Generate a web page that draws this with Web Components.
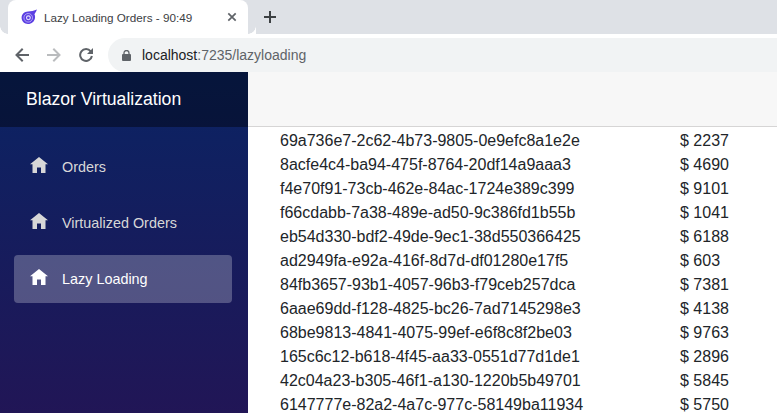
<!DOCTYPE html>
<html><head><meta charset="utf-8"><title>Lazy Loading Orders</title>
<style>html,body{margin:0;padding:0;height:100%;overflow:hidden;background:#fff}
body{display:flex;flex-direction:column;height:413px;font-family:"Liberation Sans",Arial,sans-serif}</style></head>
<body>
<browser-chrome></browser-chrome>
<app-shell>
  <side-bar slot="side" brand="Blazor Virtualization">
    <nav-link label="Orders"></nav-link>
    <nav-link label="Virtualized Orders"></nav-link>
    <nav-link label="Lazy Loading" active></nav-link>
  </side-bar>
  <order-row id-text="69a736e7-2c62-4b73-9805-0e9efc8a1e2e" amount="$ 2237"></order-row>
  <order-row id-text="8acfe4c4-ba94-475f-8764-20df14a9aaa3" amount="$ 4690"></order-row>
  <order-row id-text="f4e70f91-73cb-462e-84ac-1724e389c399" amount="$ 9101"></order-row>
  <order-row id-text="f66cdabb-7a38-489e-ad50-9c386fd1b55b" amount="$ 1041"></order-row>
  <order-row id-text="eb54d330-bdf2-49de-9ec1-38d550366425" amount="$ 6188"></order-row>
  <order-row id-text="ad2949fa-e92a-416f-8d7d-df01280e17f5" amount="$ 603"></order-row>
  <order-row id-text="84fb3657-93b1-4057-96b3-f79ceb257dca" amount="$ 7381"></order-row>
  <order-row id-text="6aae69dd-f128-4825-bc26-7ad7145298e3" amount="$ 4138"></order-row>
  <order-row id-text="68be9813-4841-4075-99ef-e6f8c8f2be03" amount="$ 9763"></order-row>
  <order-row id-text="165c6c12-b618-4f45-aa33-0551d77d1de1" amount="$ 2896"></order-row>
  <order-row id-text="42c04a23-b305-46f1-a130-1220b5b49701" amount="$ 5845"></order-row>
  <order-row id-text="6147777e-82a2-4a7c-977c-58149ba11934" amount="$ 5750"></order-row>
</app-shell>
<script>
const def=(name,html)=>customElements.define(name,class extends HTMLElement{
  connectedCallback(){ if(this.shadowRoot)return; const s=this.attachShadow({mode:'open'}); s.innerHTML=typeof html==='function'?html(this):html; }
});
def('browser-chrome',`<style>
:host{display:block;flex:none}
.strip{height:34px;background:#dee1e6;display:flex;align-items:flex-start;padding-left:8px;box-sizing:border-box}
.tab{position:relative;flex:none;width:240px;height:34px;background:#fff;border-radius:8px 8px 0 0;display:flex;align-items:center;padding:0 11px 0 13px;box-sizing:border-box;font:11.7px "Liberation Sans","Noto Sans",sans-serif;color:#3c4043}
.tab::before,.tab::after{content:"";position:absolute;bottom:0;width:8px;height:8px;background:radial-gradient(circle at 0 0,#dee1e6 7.5px,#fff 8px)}
.tab::before{left:-8px;transform:scaleX(-1)}
.tab::after{right:-8px}
.fav{flex:none;margin-right:7px}
.title{flex:1;white-space:nowrap;overflow:hidden}
.x{flex:none}
.plus{flex:none;margin:11px 0 0 16px}
.tool{height:38px;background:#fff;display:flex;align-items:center;box-sizing:border-box}
.tool svg{flex:none}
.nav{width:108px;flex:none;display:flex;align-items:center;padding:4px 0 0 15px;box-sizing:border-box;gap:18px}
.pill{flex:1;height:34px;margin-top:4px;background:#f1f3f4;border-radius:17px 0 0 17px;display:flex;align-items:center;padding-left:14px;font:14px "Liberation Sans",sans-serif;color:#5f6368;white-space:nowrap}
.lock{margin-right:11px}
.host{color:#202124}
</style>
<div class="strip"><div class="tab">
<svg class="fav" width="16" height="16" viewBox="0 0 16 16"><path d="M7 2.6C10 2.6 13 1.8 16 .6 15.4 2.2 14.6 3.6 13.4 5.2 14 6.2 14.2 7.6 14 9 13.6 12.4 10.6 15 7 15 3.4 15 .6 12.2.6 8.8.6 5.400 3.400 2.600 7 2.600Z" fill="#5b3fe2"/><circle cx="7.2" cy="8.800" r="4.300" fill="none" stroke="#b3a4f5" stroke-width="1"/><circle cx="7.400" cy="8.800" r="1.900" fill="none" stroke="#e8e2fe" stroke-width="1.100"/></svg>
<span class="title">Lazy Loading Orders - 90:49</span>
<svg class="x" width="10" height="10" viewBox="0 0 10 10"><path d="M1.300 1.300l7.400 7.400M8.700 1.300l-7.400 7.400" stroke="#5f6368" stroke-width="1.700" fill="none"/></svg>
</div>
<svg class="plus" width="12" height="12" viewBox="0 0 12 12"><path d="M6 0v12M0 6h12" stroke="#3c4043" stroke-width="2" fill="none"/></svg>
</div>
<div class="tool"><div class="nav">
<svg width="14" height="14" viewBox="0 0 14 14"><path d="M14 7H2M7.700 .8 1.500 7l6.200 6.200" stroke="#5f6368" stroke-width="2" fill="none"/></svg>
<svg width="14" height="14" viewBox="0 0 14 14"><path d="M0 7h12M6.300 .8 12.500 7l-6.200 6.200" stroke="#babcbe" stroke-width="2" fill="none"/></svg>
<svg width="14" height="14" viewBox="0 0 14 14"><path d="M11.700 3.300A5.900 5.900 0 1 0 12.900 8" stroke="#5f6368" stroke-width="2" fill="none"/><path d="M14 0v6H8z" fill="#5f6368"/></svg>
</div>
<div class="pill">
<svg class="lock" width="9" height="11" viewBox="0 0 9 11"><path d="M2 4.500V3a2.500 2.500 0 0 1 5 0v1.500" stroke="#5f6368" stroke-width="1.300" fill="none"/><rect y="4" width="9" height="7" rx="1" fill="#5f6368"/></svg>
<span><span class="host">localhost</span>:7235/lazyloading</span>
</div></div>`);
def('app-shell',`<style>
:host{display:flex;flex:1;min-height:0;overflow:hidden;font-family:"Liberation Sans",Arial,sans-serif}
main{flex:1;min-width:0;display:flex;flex-direction:column;overflow:hidden}
.top{flex:none;height:55px;box-sizing:border-box;background:#f7f7f7;border-bottom:1px solid #d6d5d5}
.list{flex:1;min-height:0;overflow:hidden;padding:2px 0 0 32px}
</style>
<slot name="side"></slot>
<main><div class="top"></div><div class="list"><slot></slot></div></main>`);
def('side-bar',h=>`<style>
:host{display:block;flex:none;width:248px;background:linear-gradient(180deg,#052767 0%,#3a0647 70%) 0 -80px/100% 1135px no-repeat}
.brand{height:55px;box-sizing:border-box;background:rgba(0,0,0,.4);color:#fff;font-size:17.6px;display:flex;align-items:center;padding-left:26px}
nav{padding:16px 16px 0 14px;display:flex;flex-direction:column;gap:8px}
</style>
<div class="brand">${h.getAttribute('brand')}</div><nav><slot></slot></nav>`);
def('nav-link',h=>`<style>
:host{display:flex;align-items:center;height:48px;box-sizing:border-box;padding-left:16px;border-radius:4px;font-size:14.4px;color:#d7d7d7}
:host([active]){background:rgba(255,255,255,.25);color:#fff}
svg{width:18px;height:16px;margin:0 14px 4px 0;flex:none;fill:currentColor}
</style>
<svg viewBox="0 0 18 16"><path d="M9 0 18 7.200H15.500V16H11V10.500H7V16H2.500V7.200H0Z"/></svg><span>${h.getAttribute('label')}</span>`);
def('order-row',h=>`<style>
:host{display:grid;grid-template-columns:400px 1fr;height:24px;line-height:24px;font-size:16px;color:#212529;white-space:nowrap}
</style>
<span>${h.getAttribute('id-text')}</span><span>${h.getAttribute('amount')}</span>`);
</script>
</body></html>
